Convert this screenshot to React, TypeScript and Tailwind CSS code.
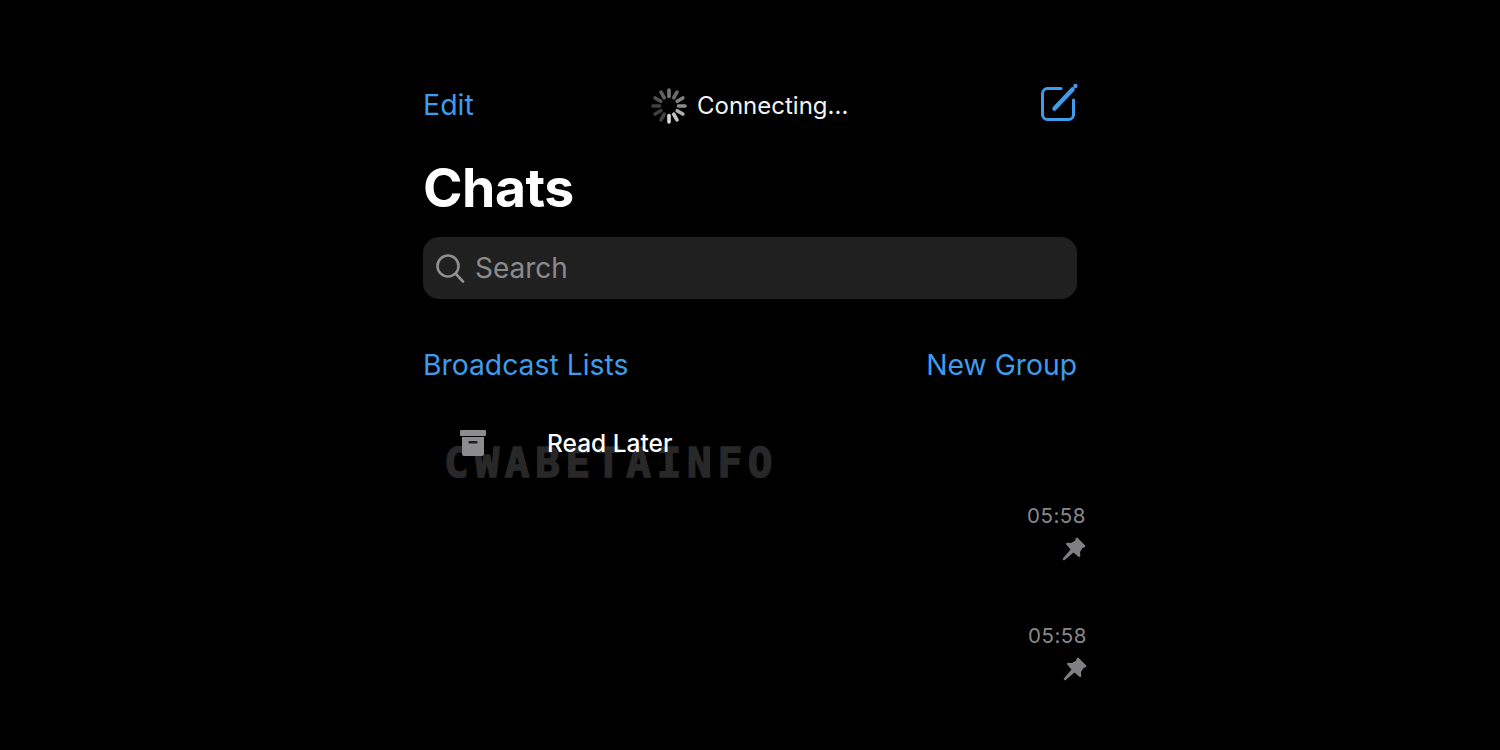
const font = "font-['Inter','Noto_Sans',sans-serif]";

function Spinner() {
  // twelve spokes, brightest at six o'clock and fading anticlockwise
  const opacities = [0.55, 0.5, 0.6, 0.65, 0.8, 0.9, 1, 0.3, 0.3, 0.3, 0.38, 0.45];
  return (
    <svg width="36" height="36" viewBox="0 0 36 36" className="shrink-0">
      {opacities.map((o, i) => (
        <line
          key={i}
          x1="18"
          y1="2"
          x2="18"
          y2="8.500"
          stroke="#d8d8d8"
          strokeOpacity={o}
          strokeWidth="3.600"
          strokeLinecap="round"
          transform={`rotate(${i * 30} 18 18)`}
        />
      ))}
    </svg>
  );
}

function ComposeIcon() {
  return (
    <svg width="38" height="38" viewBox="0 0 38 38" fill="none" stroke="#3d9cec" strokeLinecap="round">
      <path d="M21 5.500H7.500A5 5 0 0 0 2.500 10.500v21A5 5 0 0 0 7.500 36.500h21A5 5 0 0 0 33.500 31.500V17" strokeWidth="3" />
      <path d="M14.500 25.500 32.500 6.500" strokeWidth="4.500" />
      <circle cx="35.400" cy="3" r="2.200" fill="#3d9cec" stroke="none" />
    </svg>
  );
}

function ArchiveIcon() {
  return (
    <svg width="28" height="28" viewBox="0 0 28 28" className="shrink-0">
      <rect x="1" y="1" width="26" height="6" rx="1" fill="#8c8c8e" />
      <path d="M3 8h22v17a2 2 0 0 1-2 2H5a2 2 0 0 1-2-2z" fill="#8c8c8e" />
      <rect x="9.500" y="12" width="9" height="2.400" rx="1.200" fill="#1c1c1c" />
    </svg>
  );
}

function PinIcon() {
  return (
    <svg width="24" height="24" viewBox="0 0 24 24" fill="#808084">
      <path d="M15.500.800 23.200 8.500Q24 9.600 22.600 10.200L20.500 11 18 15 18.300 19Q18 20.500 16.400 19.800L11.500 15.500 2 23.500.500 22 8.500 12.500 4.200 7.600Q3.600 6.100 5.100 5.800L9 6 13 3.800 13.800 1.400Q14.400 0 15.500.800Z" />
    </svg>
  );
}

function TimeRow({ shift }: { shift: string }) {
  return (
    <div className={`flex h-[120px] flex-col items-end ${shift}`}>
      <span className="mt-[1px] text-[20.500px] leading-[30px] tracking-[0.5px] text-[#88888c]">05:58</span>
      <div className="mt-[6px]">
        <PinIcon />
      </div>
    </div>
  );
}

export default function App() {
  return (
    <div className={`flex h-[750px] w-full justify-center overflow-hidden bg-black ${font}`}>
      <div className="flex w-[654px] flex-col pt-[82px]">
        <div className="relative flex h-[46px] items-center justify-between">
          <span className="text-[28.500px] text-[#3d9cec]">Edit</span>
          <div className="absolute left-[228px] top-[5px] flex items-center gap-[10px]">
            <Spinner />
            <span className="mt-[1px] text-[24px] leading-[36px] text-[#f2f2f2]">Connecting...</span>
          </div>
          <div className="-mt-[7px] mr-[-1px]">
            <ComposeIcon />
          </div>
        </div>

        <h1 className="mt-[30px] text-[53.500px] font-bold leading-[60px] tracking-[-0.5px] text-white">Chats</h1>

        <div className="mt-[19px] flex h-[62px] items-center gap-[10px] rounded-[16px] bg-[#202020] px-[12px]">
          <svg width="30" height="30" viewBox="0 0 30 30" fill="none" stroke="#8f8f92" strokeWidth="2.600" strokeLinecap="round">
            <circle cx="13" cy="13" r="10.500" />
            <path d="m21 21 7 7.500" />
          </svg>
          <span className="-mt-[1px] text-[28px] text-[#8a8a8d]">Search</span>
        </div>

        <div className="mt-[47px] flex items-center justify-between text-[28.300px] leading-[38px] text-[#3d9cec]">
          <span>Broadcast Lists</span>
          <span>New Group</span>
        </div>

        <div className="relative mt-[29px] flex h-[60px] items-center gap-[60px] pl-[36px]">
          <span className="absolute left-[21px] top-[28px] font-['DejaVu_Sans_Mono',monospace] text-[41px] font-bold leading-[44px] tracking-[5.700px] text-[#282828] [-webkit-text-stroke:1.500px_#282828]">
            CWABETAINFO
          </span>
          <div className="relative">
            <ArchiveIcon />
          </div>
          <span className="relative text-[24.500px] font-medium text-white">Read Later</span>
        </div>

        <div className="mt-[27px] flex flex-col">
          <TimeRow shift="-mr-[9px]" />
          <TimeRow shift="-mr-[10px]" />
        </div>
      </div>
    </div>
  );
}
